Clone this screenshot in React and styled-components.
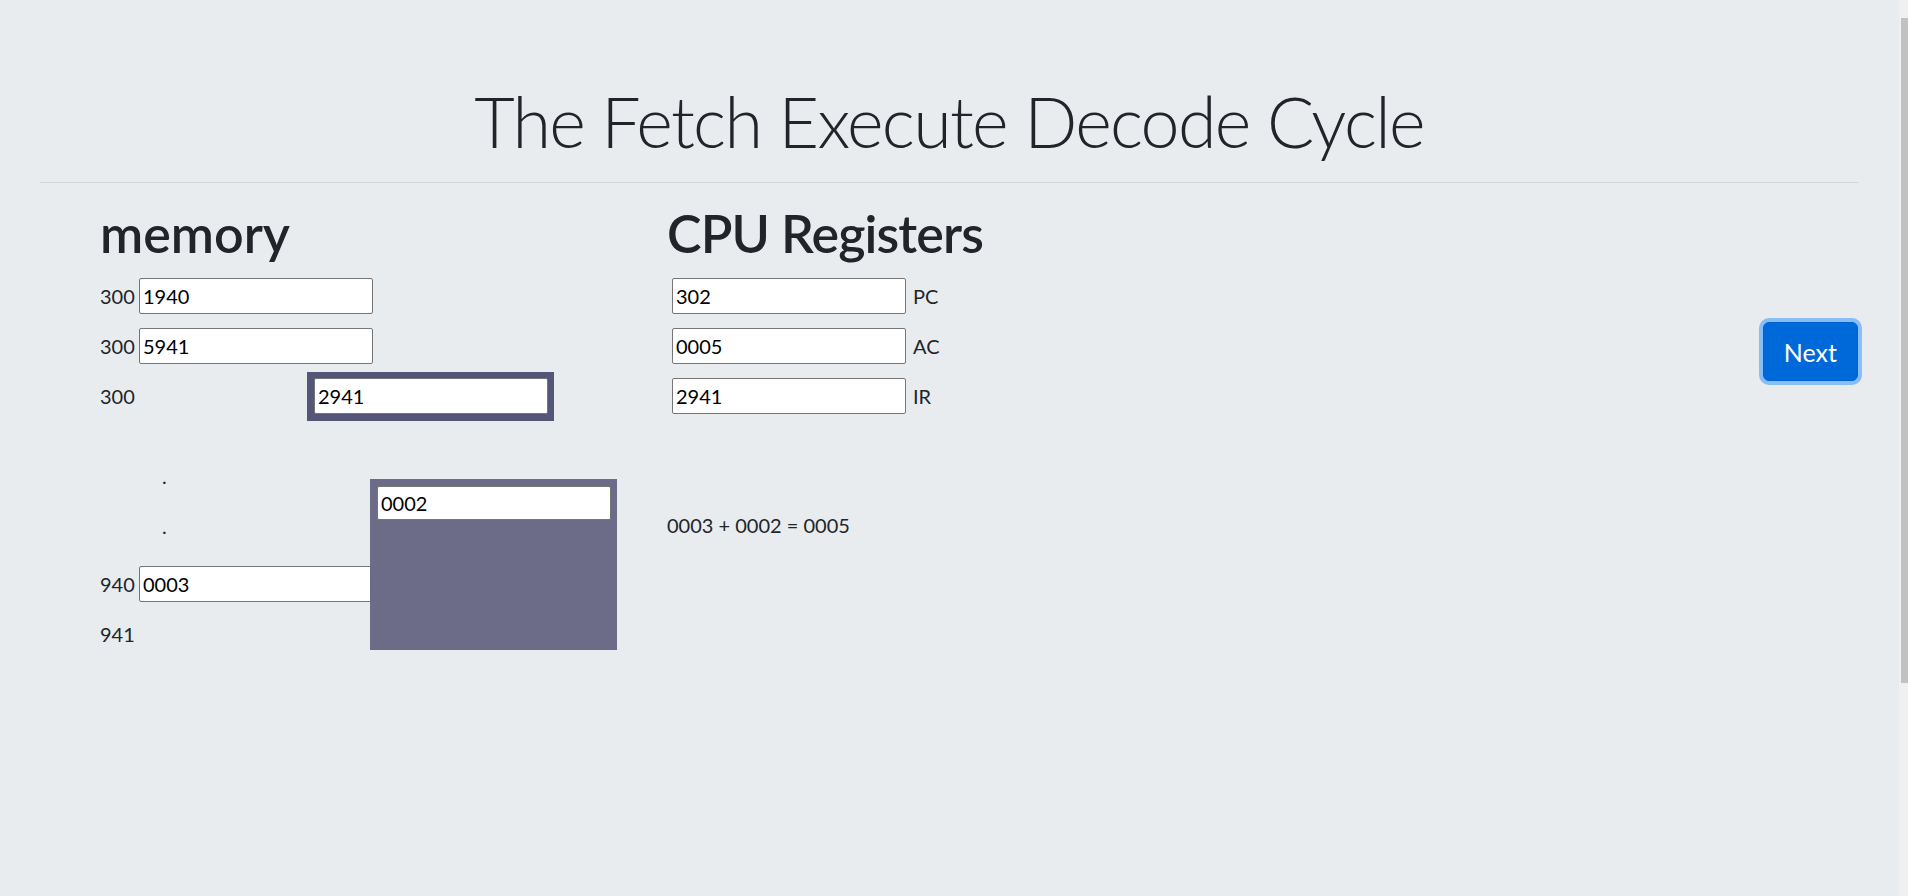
import React from "react";
import styled, { createGlobalStyle } from "styled-components";

const GlobalStyle = createGlobalStyle`
  html, body {
    margin: 0;
    padding: 0;
  }
  body {
    background: #e9ecef;
    color: #212529;
    font-family: Lato, "Open Sans", "Liberation Sans", sans-serif;
    min-height: 896px;
  }
`;

const Page = styled.div`
  padding: 0 50px 0 40px;
`;

const Title = styled.h1`
  margin: 0;
  padding-top: 79px;
  padding-bottom: 19px;
  font-size: 70px;
  font-weight: 300;
  line-height: 84px;
  letter-spacing: -1.7px;
  text-align: center;
`;

const Rule = styled.hr`
  margin: 0;
  border: 0;
  border-top: 1px solid #d3d6d9;
`;

const Main = styled.div`
  display: flex;
  padding: 20px 0 0 60px;
`;

const Column = styled.div`
  position: relative;
  width: ${p => p.width}px;
  flex-shrink: 0;
`;

const Heading = styled.h2`
  margin: 0 0 15px;
  font-size: 52px;
  font-weight: 600;
  line-height: 60px;
  letter-spacing: ${p => p.tight ? "-0.9px" : "0"};
`;

const Row = styled.div`
  display: flex;
  align-items: center;
  height: 36px;
  margin-top: ${p => p.top || 0}px;
  margin-bottom: 14px;
  padding-left: ${p => p.indent || 0}px;
  font-size: 20px;
`;

const Addr = styled.span`
  width: 39px;
  flex-shrink: 0;
`;

const Cell = styled.input`
  box-sizing: border-box;
  width: 234px;
  height: ${p => p.h || 36}px;
  padding: 0 3px;
  border: 1px solid #767676;
  border-radius: 2px;
  background: #fff;
  color: #000;
  font-family: inherit;
  font-size: 20px;
`;

const Frame = styled.div`
  margin: -6px 0 -7px ${p => p.shift}px;
  padding: 6px 6px 7px 7px;
  background: #555577;
  display: flex;
`;

const Dot = styled.span`
  padding-left: 62px;
`;

const RegName = styled.span`
  margin-left: 7px;
`;

const Moving = styled.div`
  position: absolute;
  left: 270px;
  top: 276px;
  width: 247px;
  height: 171px;
  box-sizing: border-box;
  padding: 7px 7px 0 7px;
  background: #6d6c88;
`;

const Sum = styled.p`
  margin: 96px 0 0;
  font-size: 20px;
  line-height: 30px;
`;

const Side = styled.div`
  margin-left: auto;
  padding-top: 119px;
`;

const NextButton = styled.button`
  height: 59px;
  padding: 0 20px;
  border: 1px solid #0062cc;
  border-radius: 6px;
  background: #0069d9;
  color: #fff;
  font-family: inherit;
  font-size: 25px;
  box-shadow: 0 0 0 4px #88bdf7;
  cursor: pointer;
`;

const ScrollTrack = styled.div`
  position: fixed;
  top: 0;
  right: 0;
  width: 9px;
  height: 100vh;
  background: #f0f0f0;
`;

const ScrollThumb = styled.div`
  position: absolute;
  top: 18px;
  right: 0;
  width: 7px;
  height: 665px;
  background: #c1c1c1;
`;

const memory = [
  { addr: "300", value: "1940" },
  { addr: "300", value: "5941" }
];

const registers = [
  { name: "PC", value: "302" },
  { name: "AC", value: "0005" },
  { name: "IR", value: "2941" }
];

export default function App() {
  return (
    <Page>
      <GlobalStyle />
      <Title>The Fetch Execute Decode Cycle</Title>
      <Rule />
      <Main>
        <Column width={567}>
          <Heading>memory</Heading>
          {memory.map((m, i) => (
            <Row key={i}>
              <Addr>{m.addr}</Addr>
              <Cell readOnly value={m.value} />
            </Row>
          ))}
          <Row>
            <Addr>300</Addr>
            <Frame shift={168}>
              <Cell readOnly value="2941" />
            </Frame>
          </Row>
          <Row top={44}>
            <Dot>.</Dot>
          </Row>
          <Row>
            <Dot>.</Dot>
          </Row>
          <Row top={22}>
            <Addr>940</Addr>
            <Cell readOnly value="0003" />
          </Row>
          <Row>
            <Addr>941</Addr>
          </Row>
          <Moving>
            <Cell readOnly value="0002" h={34} />
          </Moving>
        </Column>
        <Column width={400}>
          <Heading tight>CPU Registers</Heading>
          {registers.map(r => (
            <Row key={r.name} indent={5}>
              <Cell readOnly value={r.value} />
              <RegName>{r.name}</RegName>
            </Row>
          ))}
          <Sum>0003 + 0002 = 0005</Sum>
        </Column>
        <Side>
          <NextButton>Next</NextButton>
        </Side>
      </Main>
      <ScrollTrack>
        <ScrollThumb />
      </ScrollTrack>
    </Page>
  );
}
